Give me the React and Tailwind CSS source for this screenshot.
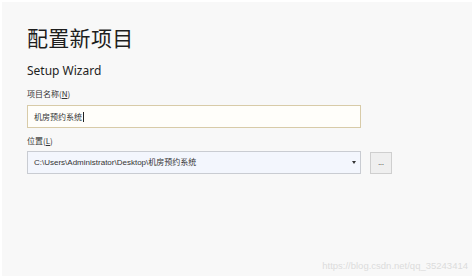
export default function App() {
  const font = { fontFamily: '"Noto Sans", "Noto Sans CJK SC", sans-serif' };
  const cjk = { fontFamily: '"Noto Sans CJK SC", sans-serif' };
  return (
    <div className="w-[474px] h-[278px] bg-white p-[2px]">
      <div className="w-full h-full bg-[#f8f8f8] relative overflow-hidden" style={font}>
        <div className="pl-[25px] pt-[21px] flex flex-col">
          <div className="text-[21px] leading-[28px] text-[#1e1e1e] tracking-[0.3px]" style={cjk}>配置新项目</div>
          <div className="mt-[12px] text-[12px] leading-[16px] text-[#1e1e1e]">Setup Wizard</div>
          <div className="mt-[9px] text-[8px] leading-[12px] text-[#333]" style={cjk}>
            项目名称(<span className="underline">N</span>)
          </div>
          <div className="mt-[5px] w-[334px] h-[23px] border border-[#d8cba8] bg-[#fffefa] flex items-center pl-[6px] text-[8px] text-[#333]" style={cjk}>
            机房预约系统<span className="inline-block w-px h-[10px] bg-[#222] ml-[1px]"></span>
          </div>
          <div className="mt-[7px] text-[8px] leading-[12px] text-[#333]" style={cjk}>
            位置(<span className="underline">L</span>)
          </div>
          <div className="mt-[4px] flex items-center gap-[9px]">
            <div className="w-[334px] h-[23px] border border-[#c9ccd2] bg-[#f3f6fd] flex items-center justify-between pl-[6px] pr-[4px] text-[8px] text-[#333]" style={{ fontFamily: '"Liberation Sans", "Noto Sans CJK SC", sans-serif' }}>
              <span>C:\Users\Administrator\Desktop\<span style={cjk}>机房预约系统</span></span>
              <span className="w-0 h-0 border-l-[2px] border-r-[2px] border-t-[3px] border-l-transparent border-r-transparent border-t-[#333]"></span>
            </div>
            <div className="w-[22px] h-[22px] border border-[#cfcfcf] bg-[#efefef] flex items-center justify-center text-[7px] text-[#555] leading-none">
              ...
            </div>
          </div>
        </div>
        <div className="absolute right-[4px] bottom-[3px] text-[9.5px] text-[#dcdcdc]" style={{ fontFamily: '"Liberation Sans", sans-serif' }}>
          https://blog.csdn.net/qq_35243414
        </div>
      </div>
    </div>
  );
}
